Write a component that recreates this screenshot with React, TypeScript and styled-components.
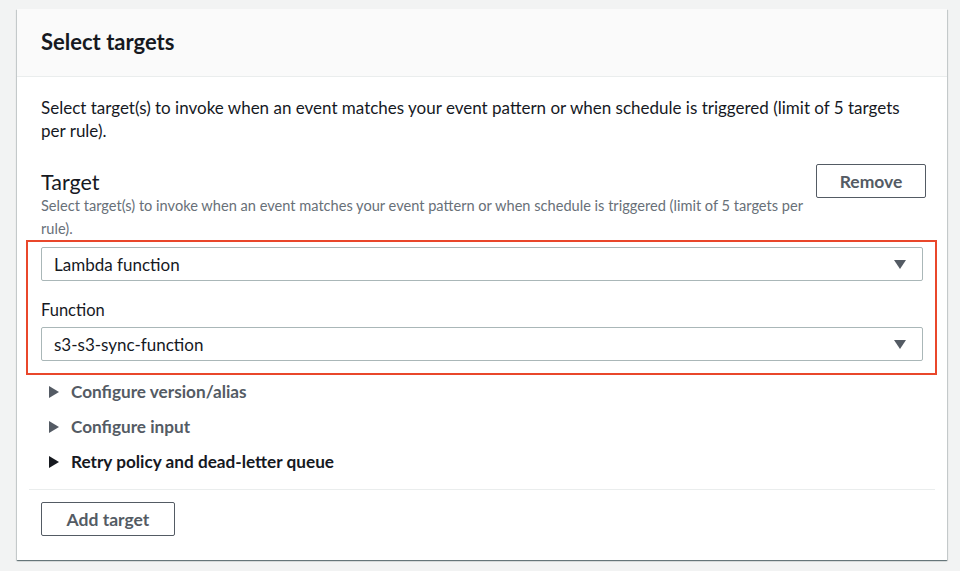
import React from "react";
import styled, { createGlobalStyle } from "styled-components";

const Global = createGlobalStyle`
  html, body { margin: 0; padding: 0; background: #f2f3f3; }
  body { font-family: Lato, "Open Sans", sans-serif; color: #16191f; }
`;

const Page = styled.div`
  padding: 9px 13px 11px 17px;
`;

const Card = styled.section`
  width: 930px;
  background: #ffffff;
  box-shadow: 0 1px 1px 0 rgba(0, 28, 36, 0.45), 1px 1px 1px 0 rgba(0, 28, 36, 0.12),
    -1px 1px 1px 0 rgba(0, 28, 36, 0.12);
`;

const Header = styled.header`
  height: 67px;
  display: flex;
  align-items: center;
  padding: 0 24px;
  background: #fafafa;
  border-bottom: 1px solid #eaeded;
`;

const Title = styled.h2`
  margin: 0;
  font-size: 22px;
  font-weight: 700;
  color: #16191f;
  padding-bottom: 2px;
`;

const Body = styled.div`
  padding: 19px 24px 24px;
`;

const Description = styled.p`
  margin: 0;
  font-size: 17px;
  line-height: 23px;
  color: #16191f;
`;

const TargetRow = styled.div`
  margin-top: 22px;
  display: flex;
  justify-content: space-between;
  align-items: flex-start;
`;

const TargetInfo = styled.div`
  padding-top: 6px;
  max-width: 775px;
`;

const TargetHeading = styled.h3`
  margin: 0;
  font-size: 21.5px;
  font-weight: 400;
  line-height: 24px;
  color: #16191f;
`;

const Hint = styled.p`
  margin: 0;
  font-size: 14.6px;
  line-height: 23px;
  color: #687078;
`;

const Button = styled.button<{ $width: number; $shift?: number }>`
  box-sizing: border-box;
  width: ${(p) => p.$width}px;
  height: 34px;
  margin-right: ${(p) => p.$shift ?? 0}px;
  background: #ffffff;
  border: 1px solid #545b64;
  border-radius: 2px;
  font-family: inherit;
  font-size: 17.5px;
  font-weight: 700;
  color: #545b64;
  padding: 0;
  cursor: pointer;
`;

const Highlight = styled.div`
  margin: 0 -14px 0 -15px;
  padding: 5px 12px 12px 13px;
  border: 2px solid #e9472b;
`;

const SelectBox = styled.div`
  box-sizing: border-box;
  height: 34px;
  display: flex;
  align-items: center;
  justify-content: space-between;
  padding: 0 16px 0 12px;
  border: 1px solid #aab7b8;
  border-radius: 2px;
  font-size: 17px;
  color: #16191f;
`;

const FieldLabel = styled.div`
  margin: 18px 0 6px;
  font-size: 16.5px;
  line-height: 22px;
  color: #16191f;
`;

const ExpanderList = styled.div`
  display: flex;
  flex-direction: column;
  margin-top: -1px;
`;

const Expander = styled.div<{ $strong?: boolean }>`
  height: 35px;
  display: flex;
  align-items: center;
  gap: 12px;
  padding-left: 8px;
  font-size: 17.2px;
  font-weight: 700;
  color: ${(p) => (p.$strong ? "#16191f" : "#545b64")};
`;

const Divider = styled.hr`
  margin: 10px -12px 12px;
  border: 0;
  border-top: 1px solid #eaeded;
`;

const Caret = () => (
  <svg width="12" height="9" viewBox="0 0 12 9" aria-hidden>
    <path d="M0 0 H12 L6 9 Z" fill="#545b64" />
  </svg>
);

const RightTriangle = ({ color }: { color: string }) => (
  <svg width="10" height="12" viewBox="0 0 10 12" aria-hidden>
    <path d="M0 0 L10 6 L0 12 Z" fill={color} />
  </svg>
);

const Select = ({ value }: { value: string }) => (
  <SelectBox>
    <span>{value}</span>
    <Caret />
  </SelectBox>
);

const sections = [
  { label: "Configure version/alias", strong: false },
  { label: "Configure input", strong: false },
  { label: "Retry policy and dead-letter queue", strong: true },
];

export default function App() {
  return (
    <>
      <Global />
      <Page>
        <Card>
          <Header>
            <Title>Select targets</Title>
          </Header>
          <Body>
            <Description>
              Select target(s) to invoke when an event matches your event pattern or when schedule is
              triggered (limit of 5 targets per rule).
            </Description>
            <TargetRow>
              <TargetInfo>
                <TargetHeading>Target</TargetHeading>
                <Hint>
                  Select target(s) to invoke when an event matches your event pattern or when schedule is
                  triggered (limit of 5 targets per rule).
                </Hint>
              </TargetInfo>
              <Button $width={111} $shift={-3}>
                Remove
              </Button>
            </TargetRow>
            <Highlight>
              <Select value="Lambda function" />
              <FieldLabel>Function</FieldLabel>
              <Select value="s3-s3-sync-function" />
            </Highlight>
            <ExpanderList>
              {sections.map((s) => (
                <Expander key={s.label} $strong={s.strong}>
                  <RightTriangle color={s.strong ? "#16191f" : "#545b64"} />
                  <span>{s.label}</span>
                </Expander>
              ))}
            </ExpanderList>
            <Divider />
            <Button $width={134}>Add target</Button>
          </Body>
        </Card>
      </Page>
    </>
  );
}
